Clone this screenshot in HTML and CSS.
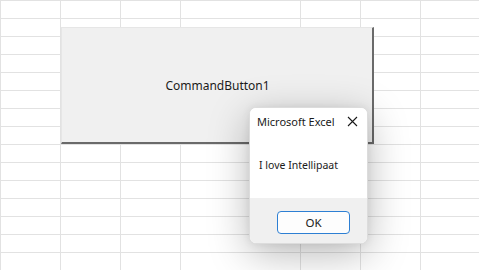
FILE: index.html
```html
<!DOCTYPE html>
<html>
<head>
<meta charset="utf-8">
<link rel="stylesheet" href="styles.css">
</head>
<body>
<div class="sheet">
  <div class="col c60"></div>
  <div class="col c60"></div>
  <div class="col c60"></div>
  <div class="col c120"></div>
  <div class="col c60"></div>
  <div class="col c60"></div>
  <div class="col last"></div>

  <div class="cmd-button"><span>CommandButton1</span></div>

  <div class="dialog">
    <div class="dlg-body">
      <div class="dlg-title">
        <span>Microsoft Excel</span>
        <svg class="close" width="11" height="11" viewBox="0 0 11 11"><path d="M1 1 L10 10 M10 1 L1 10" stroke="#1a1a1a" stroke-width="1.1" fill="none"/></svg>
      </div>
      <div class="dlg-msg">I love Intellipaat</div>
    </div>
    <div class="dlg-footer">
      <button class="ok">OK</button>
    </div>
  </div>
</div>
</body>
</html>
```
FILE: styles.css
```css
html, body {
  margin: 0;
  padding: 0;
  background: #ffffff;
}
body {
  width: 479px;
  height: 270px;
  overflow: hidden;
  font-family: "Noto Sans", "Open Sans", sans-serif;
}
.sheet {
  position: relative;
  display: flex;
  width: 479px;
  height: 270px;
  overflow: hidden;
}
.col {
  height: 270px;
  border-left: 1px solid #e2e2e2;
  box-sizing: border-box;
  background: repeating-linear-gradient(to bottom, #e2e2e2 0, #e2e2e2 1px, transparent 1px, transparent 18px);
}
.c60 { width: 60px; }
.c120 { width: 120px; }
.last { flex: 1; }

.cmd-button {
  position: absolute;
  left: 61px;
  top: 27px;
  width: 313px;
  height: 117px;
  box-sizing: border-box;
  background: #f0f0f0;
  border-top: 1px solid #e6e6e6;
  border-left: 1px solid #e6e6e6;
  border-right: 2px solid #6a6a6a;
  border-bottom: 2px solid #6a6a6a;
  display: flex;
  align-items: center;
  justify-content: center;
  font-size: 12px;
  color: #1b1b1b;
}
.cmd-button span { margin-left: 1px; margin-top: 1px; }

.dialog {
  position: absolute;
  left: 249px;
  top: 107px;
  width: 119px;
  height: 137px;
  box-sizing: border-box;
  border: 1px solid #dcdcdc;
  border-radius: 7px;
  overflow: hidden;
  background: #ffffff;
  display: flex;
  flex-direction: column;
  box-shadow: 0 10px 40px rgba(0,0,0,0.28), 0 0 8px rgba(0,0,0,0.07);
}
.dlg-body {
  height: 90px;
  background: #ffffff;
}
.dlg-title {
  display: flex;
  align-items: center;
  justify-content: space-between;
  height: 26px;
  padding: 0 9px 0 7px;
  font-size: 11px;
  color: #1a1a1a;
}
.close { display: block; }
.dlg-msg {
  margin-top: 24px;
  padding-left: 9px;
  font-size: 10.5px;
  color: #1a1a1a;
}
.dlg-footer {
  flex: 1;
  background: #f0f0f0;
  padding-top: 12px;
  padding-left: 27px;
}
.ok {
  width: 73px;
  height: 23px;
  border: 1px solid #2d7fd3;
  border-radius: 4px;
  background: #fdfdfd;
  font-family: "Noto Sans", "Open Sans", sans-serif;
  font-size: 11.5px;
  color: #1a1a1a;
  padding: 0;
}
```
